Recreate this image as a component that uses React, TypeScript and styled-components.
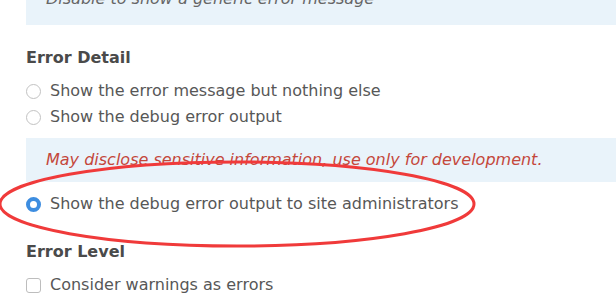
import type { FC } from "react"
import styled, { createGlobalStyle } from "styled-components"

const GlobalStyle = createGlobalStyle`
  html, body {
    margin: 0;
    padding: 0;
    background: #fff;
    overflow: hidden;
  }
  body {
    font-family: "DejaVu Sans", "Liberation Sans", sans-serif;
    font-size: 16px;
    color: #555;
  }
`

const Page = styled.div`
  position: relative;
  width: 616px;
  height: 304px;
  padding-left: 26px;
  box-sizing: border-box;
  overflow: hidden;
`

const Note = styled.div<{ $tone?: "info" | "warn"; $flush?: boolean }>`
  background: #e9f3fa;
  padding: ${(p) => (p.$flush ? "14px 20px" : "10px 20px")};
  margin: ${(p) => (p.$flush ? "-27px 0 0 0" : "8px 0 9px 0")};
  line-height: 24px;
  font-style: italic;
  font-size: 16px;
  color: ${(p) => (p.$tone === "warn" ? "#c4473b" : "#666")};
  white-space: nowrap;
`

const Section = styled.section`
  margin-top: 21px;
  & + & {
    margin-top: 23px;
  }
`

const Heading = styled.h3`
  margin: 0 0 8px 0;
  font-size: 16px;
  line-height: 24px;
  font-weight: bold;
  color: #4a4a4a;
`

const Option = styled.label`
  display: flex;
  align-items: center;
  height: 26px;
  line-height: 26px;
  color: #575757;
  white-space: nowrap;
`

const Radio = styled.span<{ $checked?: boolean }>`
  box-sizing: border-box;
  width: 15px;
  height: 15px;
  margin-right: 9px;
  border-radius: 50%;
  background: #fff;
  border: ${(p) => (p.$checked ? "4px solid #3d8de0" : "1px solid #c2c2c2")};
  flex-shrink: 0;
`

const Checkbox = styled.span`
  box-sizing: border-box;
  width: 15px;
  height: 15px;
  margin-right: 9px;
  border-radius: 3px;
  background: #fff;
  border: 1px solid #bdbdbd;
  flex-shrink: 0;
`

const Annotation = styled.svg`
  position: absolute;
  left: 0;
  top: 0;
  pointer-events: none;
`

const RadioOption: FC<{ label: string; checked?: boolean }> = ({
  label,
  checked,
}) => (
  <Option>
    <Radio $checked={checked} />
    {label}
  </Option>
)

export default function App() {
  return (
    <Page>
      <GlobalStyle />
      <Note $flush>Disable to show a generic error message</Note>
      <Section>
        <Heading>Error Detail</Heading>
        <RadioOption label="Show the error message but nothing else" />
        <RadioOption label="Show the debug error output" />
        <Note $tone="warn">
          May disclose sensitive information, use only for development.
        </Note>
        <RadioOption label="Show the debug error output to site administrators" checked />
      </Section>
      <Section>
        <Heading>Error Level</Heading>
        <Option>
          <Checkbox />
          Consider warnings as errors
        </Option>
      </Section>
      <Annotation width="616" height="304" viewBox="0 0 616 304">
        <ellipse
          cx="237"
          cy="204"
          rx="237"
          ry="42"
          fill="none"
          stroke="#f03a3a"
          strokeWidth="3"
        />
      </Annotation>
    </Page>
  )
}
